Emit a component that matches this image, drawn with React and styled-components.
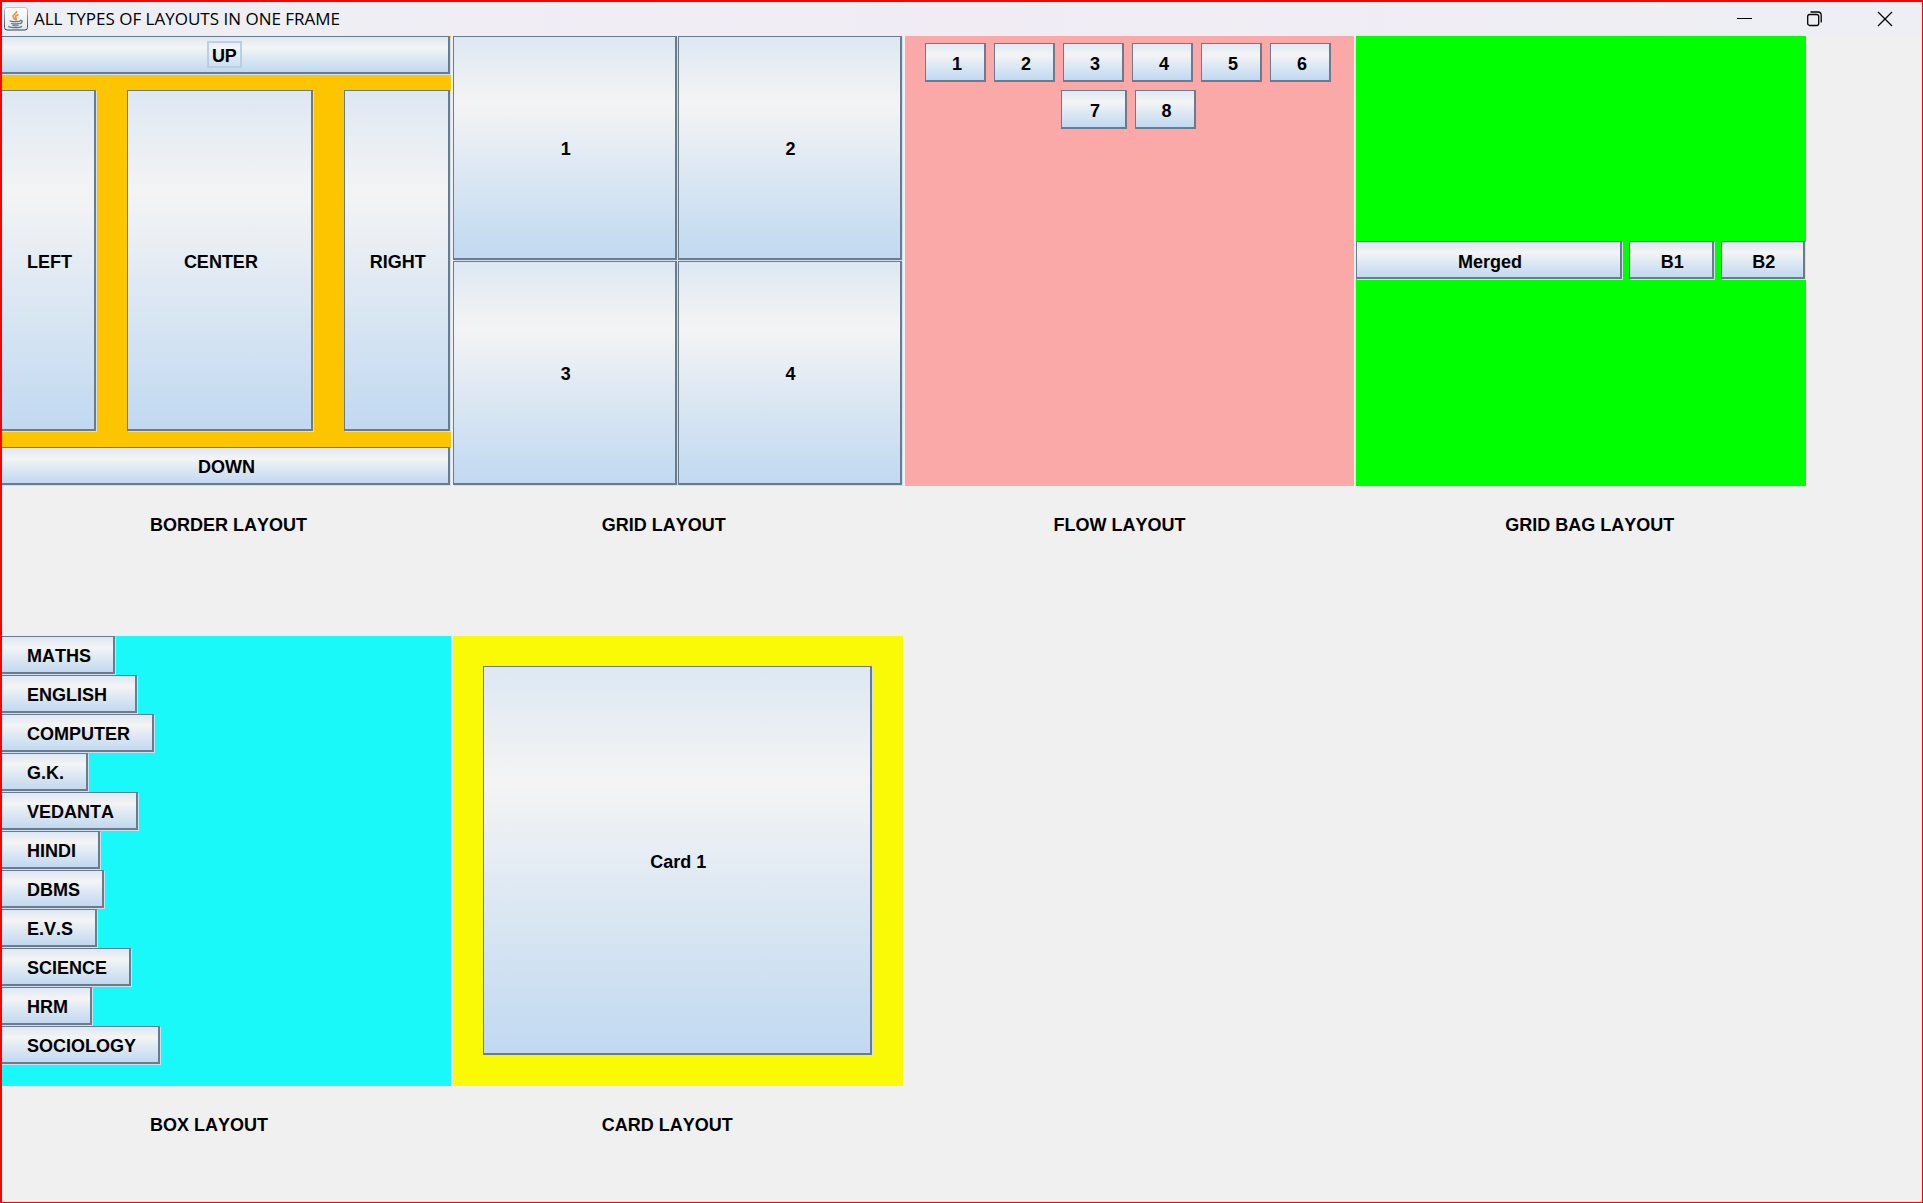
import React from 'react'
import styled, { createGlobalStyle } from 'styled-components'

const GlobalStyle = createGlobalStyle`
  * {
    box-sizing: border-box;
  }
  body {
    margin: 0;
    background: #f0f0f0;
    color: #000;
    font-family: 'Liberation Sans', Arial, sans-serif;
    font-kerning: none;
  }
`

// Window
const Frame = styled.div`
  position: relative;
  min-height: 100vh;
  padding: 2px 0 1px 1px;
  background: #f0f0f0;
  /* the outline lies over the panels, which touch the window edge */
  &::after {
    content: '';
    position: absolute;
    inset: 0;
    border: solid #f00;
    border-width: 2px 1px 1px 2px;
    pointer-events: none;
  }
`

const TitleBar = styled.header`
  display: flex;
  align-items: center;
  height: 34px;
  padding: 0 3px 0 2px;
  background: linear-gradient(to right, #edeff4, #f1ecf3 50%, #edeff4);
`

const Title = styled.h1`
  flex: 1;
  margin: 0 0 0 5px;
  font: 400 17px/24px 'Open Sans', 'Noto Sans', sans-serif;
`

const WindowButton = styled.button`
  display: flex;
  align-items: center;
  justify-content: center;
  width: 70px;
  height: 34px;
  padding: 0;
  border: 0;
  background: none;
`

// Sections
const Sections = styled.main`
  display: grid;
  grid-template-columns: repeat(4, 47fr) 12fr;
  gap: 100px 2px;
`

const Section = styled.section`
  grid-column: ${props => props.$column};
  min-width: 0;
`

const Caption = styled.h2`
  height: 50px;
  margin: 0;
  padding: 29px 0 0 149px;
  font-size: 18px;
  line-height: 20px;
  white-space: nowrap;
`

const Panel = styled.div`
  aspect-ratio: 1;
  background: ${props => props.$bg};
`

const BorderPanel = styled(Panel)`
  display: grid;
  grid-template-columns: auto 1fr auto;
  grid-template-rows: 39px 1fr 39px;
  gap: 15px 30px;
`

const GridPanel = styled(Panel)`
  display: grid;
  grid-template-columns: 1fr 1fr;
  grid-template-rows: 1fr 1fr;
`

const FlowPanel = styled(Panel)`
  display: flex;
  flex-wrap: wrap;
  align-content: flex-start;
  justify-content: center;
  gap: 8px;
  padding: 7px 17px 7px 15px;
`

const GridBagPanel = styled(Panel)`
  display: grid;
  grid-template-columns: 28fr 9fr 9fr;
  align-content: center;
  column-gap: 6px;
`

const BoxPanel = styled(Panel)`
  display: flex;
  flex-direction: column;
  align-items: flex-start;
`

const CardPanel = styled(Panel)`
  display: grid;
  padding: 30px;
`

// Metal look and feel button
const Button = styled.button`
  grid-column: ${props => (props.$full ? '1 / -1' : 'auto')};
  min-width: ${props => props.$min || 0}px;
  min-height: 38px;
  margin: ${props => (props.$flat ? '0' : '0 1px 1px 0')};
  padding: 4px 22px 0 25px;
  border: solid #6b7b8c;
  border-width: 1px 2px 2px 1px;
  border-radius: 0;
  background: linear-gradient(#dde8f3, #f4f4f4 30%, #dde8f3 60%, #c1d9f1);
  box-shadow: ${props => (props.$flat ? 'none' : '1px 1px 0 #cfe0f1')};
  color: #000;
  font: 700 18px/20px 'Liberation Sans', Arial, sans-serif;
  font-kerning: none;
  white-space: nowrap;
`

const FlowButton = styled(Button)`
  height: 39px;
`

const BoxButton = styled(Button)`
  text-align: left;
`

const FocusRing = styled.span`
  display: inline-block;
  margin: -4px 4px 0 0;
  padding: 3px 3px 0;
  border: 2px solid #b8cfe5;
  vertical-align: top;
`

const JavaIcon = () => (
  <svg width="26" height="26" viewBox="0 0 26 26" fill="none" aria-hidden="true">
    <defs>
      <linearGradient id="tile" x1="0" y1="0" x2="0" y2="1">
        <stop offset="0" stopColor="#fff" />
        <stop offset="1" stopColor="#e4e8ea" />
      </linearGradient>
      <linearGradient id="tileEdge" x1="0" y1="0" x2="0" y2="1">
        <stop offset="0" stopColor="#b4cad6" />
        <stop offset="1" stopColor="#2c4350" />
      </linearGradient>
    </defs>
    <rect x="1.5" y="1.5" width="23" height="22.5" rx="2.5" fill="url(#tile)" stroke="url(#tileEdge)" />
    <path
      d="M13.500 5c1 2.500-4 3.500-3.500 5.500.2 1.500 1.500 2 2 3.500M15.500 8.500c-2.500 1-3.500 2-2.500 3.500.7 1 .5 1.500-.3 2.500"
      stroke="#ee8a3c"
      strokeWidth="1.6"
    />
    <path
      d="M7.500 14.500c-1.500 1.500 9 1.500 10 .2M8.500 17c0 1.300 6.500 1.300 8 .2M9.500 19c.5 1 4.500 1 6 .2M17 14.500c3-.6 3 2.500-.5 3.500M6 20c-2 2 11 2.200 13 .2"
      stroke="#55799b"
      strokeWidth="1.3"
    />
  </svg>
)

const MinimizeIcon = () => (
  <svg width="16" height="16" viewBox="0 0 16 16" stroke="#000" aria-hidden="true">
    <path d="M0 7.5h15" />
  </svg>
)

const RestoreIcon = () => (
  <svg width="16" height="16" viewBox="0 0 16 16" fill="none" stroke="#000" strokeWidth="1.3" aria-hidden="true">
    <rect x="0.7" y="3.5" width="11" height="11" rx="2" />
    <path d="M3.500 1h7.500a3.200 3.200 0 0 1 3.200 3.200V11.500" />
  </svg>
)

const CloseIcon = () => (
  <svg width="16" height="16" viewBox="0 0 16 16" stroke="#000" strokeWidth="1.3" aria-hidden="true">
    <path d="M1 1l14 14M15 1L1 15" />
  </svg>
)

const subjects = [
  { name: 'MATHS' },
  { name: 'ENGLISH', min: 136 },
  { name: 'COMPUTER' },
  { name: 'G.K.' },
  { name: 'VEDANTA' },
  { name: 'HINDI' },
  { name: 'DBMS' },
  { name: 'E.V.S' },
  { name: 'SCIENCE' },
  { name: 'HRM' },
  { name: 'SOCIOLOGY' },
]

const App = () => (
  <>
    <GlobalStyle />
    <Frame>
      <TitleBar>
        <JavaIcon />
        <Title>ALL TYPES OF LAYOUTS IN ONE FRAME</Title>
        <WindowButton aria-label="Minimize">
          <MinimizeIcon />
        </WindowButton>
        <WindowButton aria-label="Restore">
          <RestoreIcon />
        </WindowButton>
        <WindowButton aria-label="Close">
          <CloseIcon />
        </WindowButton>
      </TitleBar>
      <Sections>
        <Section $column={1}>
          <BorderPanel $bg="#fcc500">
            <Button $full>
              <FocusRing>UP</FocusRing>
            </Button>
            <Button>LEFT</Button>
            <Button>CENTER</Button>
            <Button>RIGHT</Button>
            <Button $full>DOWN</Button>
          </BorderPanel>
          <Caption>BORDER LAYOUT</Caption>
        </Section>
        <Section $column={2}>
          <GridPanel>
            {[1, 2, 3, 4].map(n => (
              <Button key={n}>{n}</Button>
            ))}
          </GridPanel>
          <Caption>GRID LAYOUT</Caption>
        </Section>
        <Section $column={3}>
          <FlowPanel $bg="#fba8a8">
            {[1, 2, 3, 4, 5, 6, 7, 8].map(n => (
              <FlowButton key={n} $flat $min={n === 7 ? 66 : 61}>
                {n}
              </FlowButton>
            ))}
          </FlowPanel>
          <Caption>FLOW LAYOUT</Caption>
        </Section>
        <Section $column={4}>
          <GridBagPanel $bg="#0f0">
            <Button>Merged</Button>
            <Button>B1</Button>
            <Button>B2</Button>
          </GridBagPanel>
          <Caption>GRID BAG LAYOUT</Caption>
        </Section>
        <Section $column={1}>
          <BoxPanel $bg="#19f9f9">
            {subjects.map(({ name, min }) => (
              <BoxButton key={name} $min={min}>
                {name}
              </BoxButton>
            ))}
          </BoxPanel>
          <Caption>BOX LAYOUT</Caption>
        </Section>
        <Section $column={2}>
          <CardPanel $bg="#fafa05">
            <Button>Card 1</Button>
          </CardPanel>
          <Caption>CARD LAYOUT</Caption>
        </Section>
      </Sections>
    </Frame>
  </>
)

export default App
